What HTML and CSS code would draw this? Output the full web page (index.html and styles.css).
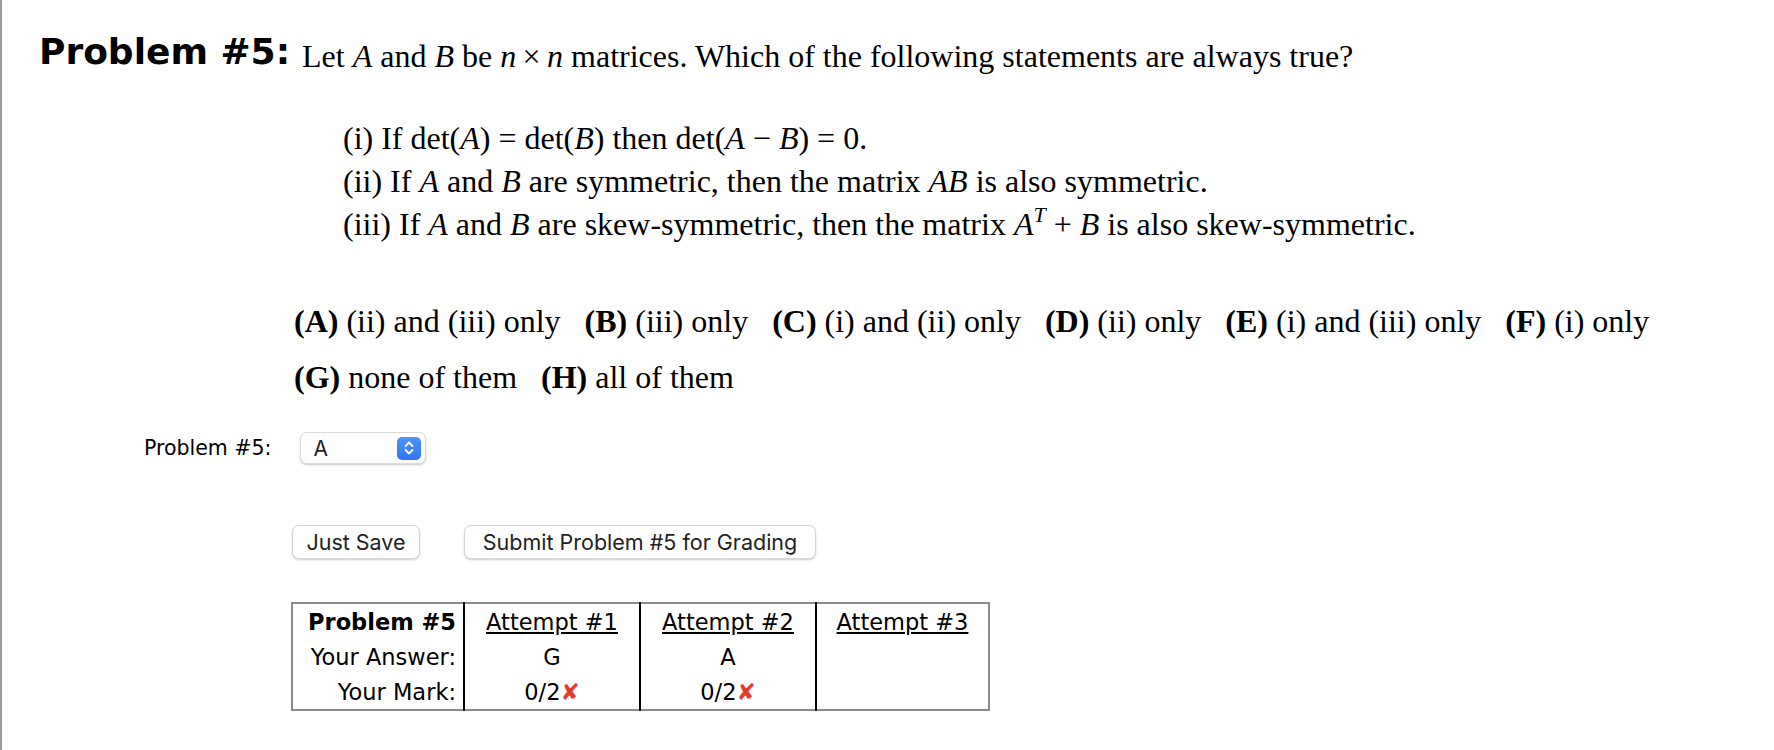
FILE: index.html
```html
<!DOCTYPE html>
<html lang="en">
<head>
<meta charset="utf-8">
<title>Problem #5</title>
<link rel="stylesheet" href="styles.css">
</head>
<body>
<div class="page">
  <div class="question">
    <span class="qlabel">Problem #5:</span>
    <span class="qtext">Let <i>A</i> and <i>B</i> be <i>n</i>&#8201;×&#8201;<i>n</i> matrices. Which of the following statements are always true?</span>
  </div>

  <div class="statements">
    <div class="stmt">(i) If det(<i>A</i>) = det(<i>B</i>) then det(<i>A</i> − <i>B</i>) = 0.</div>
    <div class="stmt">(ii) If <i>A</i> and <i>B</i> are symmetric, then the matrix <i>AB</i> is also symmetric.</div>
    <div class="stmt">(iii) If <i>A</i> and <i>B</i> are skew-symmetric, then the matrix <i>A</i><sup class="sup"><i>T</i></sup> + <i>B</i> is also skew-symmetric.</div>
  </div>

  <div class="options">
    <div class="optline">
      <span class="opt"><b>(A)</b> (ii) and (iii) only</span>
      <span class="opt"><b>(B)</b> (iii) only</span>
      <span class="opt"><b>(C)</b> (i) and (ii) only</span>
      <span class="opt"><b>(D)</b> (ii) only</span>
      <span class="opt"><b>(E)</b> (i) and (iii) only</span>
      <span class="opt"><b>(F)</b> (i) only</span>
    </div>
    <div class="optline">
      <span class="opt"><b>(G)</b> none of them</span>
      <span class="opt"><b>(H)</b> all of them</span>
    </div>
  </div>

  <div class="answer-row">
    <span class="alabel">Problem #5:</span>
    <div class="select">
      <span class="select-value">A</span>
      <span class="stepper">
        <svg width="12" height="16" viewBox="0 0 12 16" aria-hidden="true">
          <polyline points="2.5,6 6,2.5 9.5,6" fill="none" stroke="#fff" stroke-width="1.8" stroke-linecap="round" stroke-linejoin="round"/>
          <polyline points="2.5,10 6,13.5 9.5,10" fill="none" stroke="#fff" stroke-width="1.8" stroke-linecap="round" stroke-linejoin="round"/>
        </svg>
      </span>
    </div>
  </div>

  <div class="buttons">
    <button class="btn btn-save">Just Save</button>
    <button class="btn btn-submit">Submit Problem #5 for Grading</button>
  </div>

  <table class="attempts">
    <colgroup>
      <col class="c1"><col class="c2"><col class="c3"><col class="c4">
    </colgroup>
    <tr>
      <th class="rowhead">Problem #5</th>
      <th><a class="att">Attempt #1</a></th>
      <th><a class="att">Attempt #2</a></th>
      <th><a class="att">Attempt #3</a></th>
    </tr>
    <tr>
      <td class="rowlabel">Your Answer:</td>
      <td>G</td>
      <td>A</td>
      <td></td>
    </tr>
    <tr>
      <td class="rowlabel">Your Mark:</td>
      <td>0/2<span class="wrong">✘</span></td>
      <td>0/2<span class="wrong">✘</span></td>
      <td></td>
    </tr>
  </table>
</div>
</body>
</html>
```

FILE: styles.css
```css
html, body {
  margin: 0;
  padding: 0;
  background: #fff;
}

.page {
  min-height: 750px;
  box-sizing: border-box;
  border-left: 2px solid #9a9a9a;
  padding-top: 31px;
  color: #000;
}

.question {
  padding-left: 37px;
  line-height: 42px;
  white-space: nowrap;
}

.qlabel {
  font-family: "DejaVu Sans", Verdana, sans-serif;
  font-weight: bold;
  font-size: 36px;
}

.qtext {
  font-family: "Liberation Serif", "Times New Roman", serif;
  font-size: 32px;
  margin-left: 8px;
  vertical-align: -3px;
}

.statements {
  margin-top: 37px;
  padding-left: 341px;
  font-family: "Liberation Serif", "Times New Roman", serif;
  font-size: 32px;
  line-height: 43px;
}

.sup {
  font-size: 22px;
  vertical-align: 0;
  position: relative;
  top: -13px;
  line-height: 0;
}

.options {
  margin-top: 47px;
  padding-left: 292px;
  font-family: "Liberation Serif", "Times New Roman", serif;
  font-size: 32px;
  line-height: 56px;
}

.optline {
  display: flex;
  gap: 24px;
  white-space: nowrap;
}

.answer-row {
  margin-top: 27px;
  padding-left: 142px;
  display: flex;
  align-items: center;
  gap: 29px;
}

.alabel {
  font-family: "DejaVu Sans", Verdana, sans-serif;
  font-size: 20.5px;
}

.select {
  width: 126px;
  height: 32px;
  box-sizing: border-box;
  border-radius: 7px;
  background: #fff;
  border: 1px solid #dcdcdc;
  box-shadow: 0 1px 2px rgba(0,0,0,0.22);
  display: flex;
  align-items: center;
  justify-content: space-between;
  padding: 0 4px 0 12px;
}

.select-value {
  font-family: Inter, "Liberation Sans", sans-serif;
  font-size: 21px;
  color: #222;
}

.stepper {
  width: 24px;
  height: 23px;
  border-radius: 5px;
  background: linear-gradient(#4f95f8, #2f74ee);
  display: flex;
  align-items: center;
  justify-content: center;
}

.buttons {
  margin-top: 61px;
  padding-left: 290px;
  display: flex;
  gap: 44px;
}

.btn {
  height: 34px;
  box-sizing: border-box;
  background: #fff;
  border: 1px solid #d6d6d6;
  border-radius: 7px;
  box-shadow: 0 1px 2px rgba(0,0,0,0.2);
  font-family: Inter, "Liberation Sans", sans-serif;
  font-size: 21.5px;
  color: #222;
  padding: 0 8px;
  margin: 0;
}

.btn-save { width: 128px; }
.btn-submit { width: 352px; }

.attempts {
  margin-top: 43px;
  margin-left: 289px;
  border-collapse: collapse;
  border: 2px solid #8a8a8a;
  table-layout: fixed;
  font-family: "DejaVu Sans", Verdana, sans-serif;
  font-size: 22.5px;
}

.c1 { width: 172px; }
.c2 { width: 176px; }
.c3 { width: 176px; }
.c4 { width: 173px; }

.attempts th, .attempts td {
  height: 35px;
  padding: 0 7px;
  border-left: 2px solid #000;
  text-align: center;
  font-weight: normal;
  white-space: nowrap;
}

.attempts th.rowhead {
  font-weight: bold;
  text-align: right;
  border-left: none;
}

.attempts td.rowlabel {
  text-align: right;
  border-left: none;
}

.att {
  color: #000;
  text-decoration: underline;
}

.wrong {
  color: #e53a2f;
  font-weight: bold;
  font-size: 23px;
}
```
